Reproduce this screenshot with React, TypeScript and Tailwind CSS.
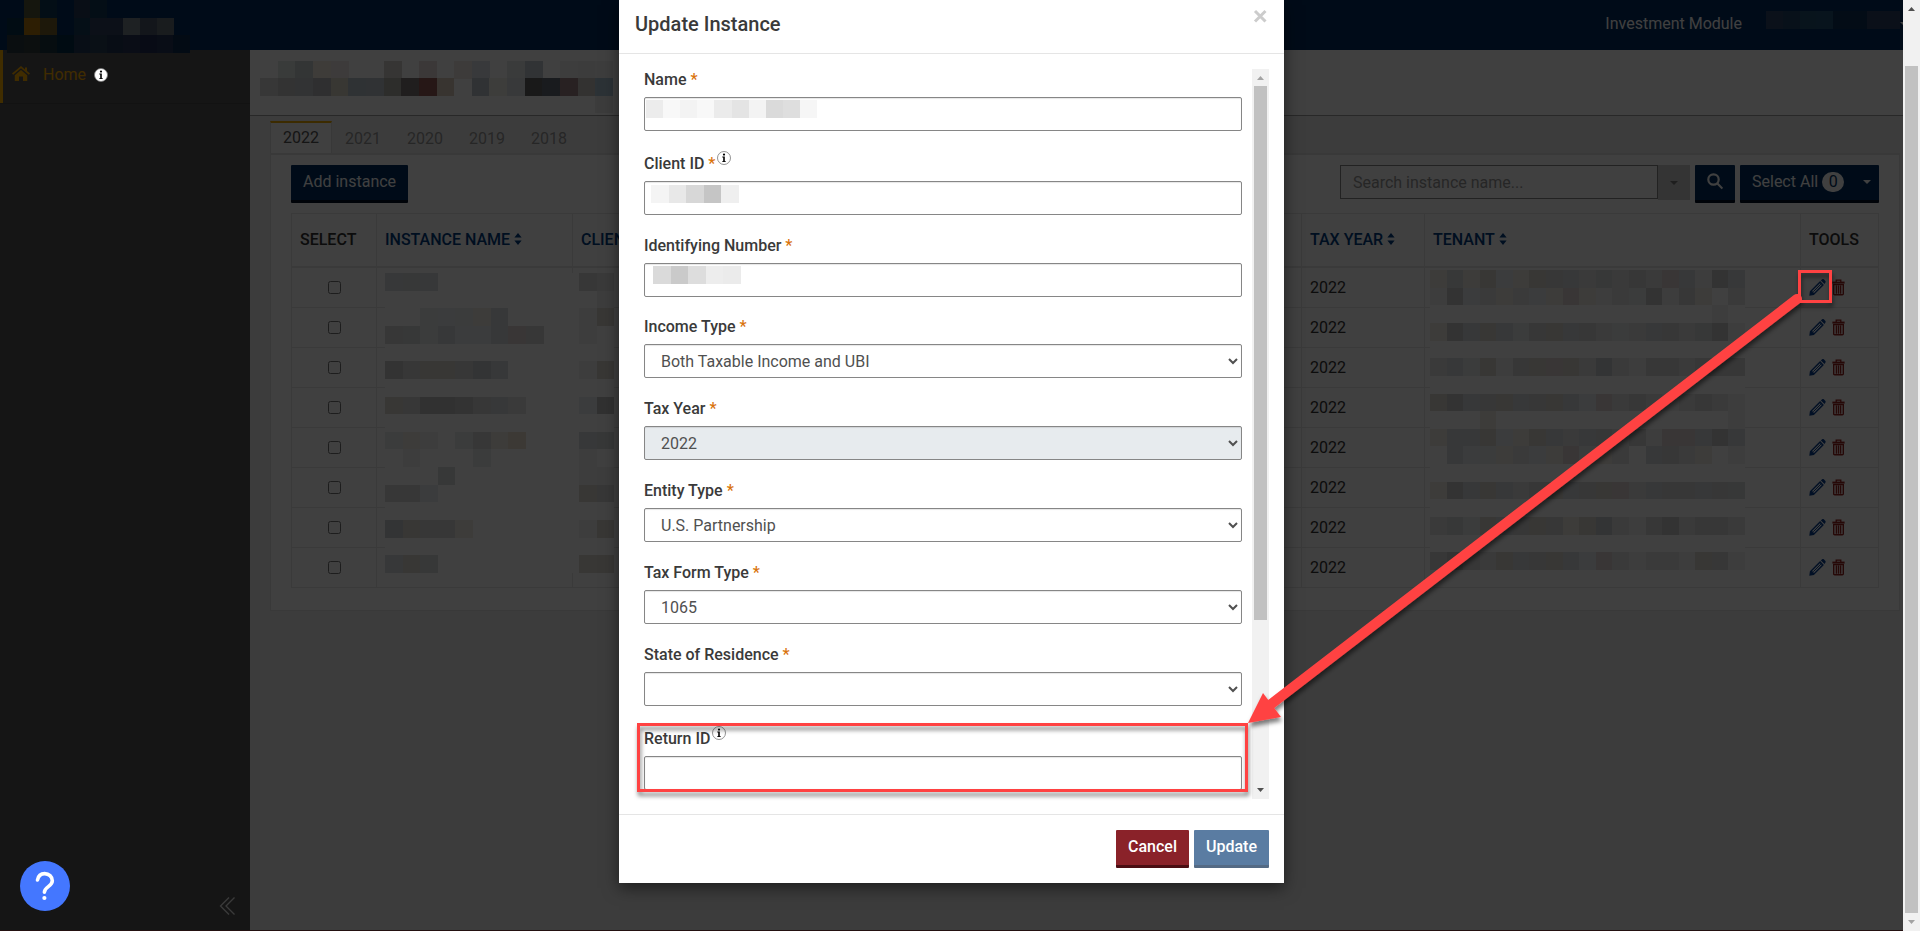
import type { ReactNode } from "react";

const palette: Record<string, string> = {
  ".": "#fdfdfd",
  a: "#f3f3f3",
  b: "#e8e8e8",
  c: "#dadada",
  d: "#cccccc",
  e: "#ebedf1",
  f: "#dadde3",
  g: "#f3f0e8",
  h: "#e0d9d2",
  i: "#e2d7d8",
  j: "#ebf0ee",
  k: "#dae0de",
  l: "#c2c2c2",
  m: "#c9cdd4",
  n: "#f0e4d4",
};

const nameBlocks = [
  "fkf..........",
  ".............",
  "..jejgf......",
  "ckjfeefic....",
  ".............",
  "dchhcmf......",
  ".............",
  "hclldcfb.....",
  ".............",
  "jga.jcgn.....",
  ".a...j.......",
  "...k.........",
  "cce..........",
  ".............",
  "mhccg........",
  ".............",
  "fhk..........",
];

const clientBlocks = ["cb", ".a", "ah", "a.", "..", "ah", "..", "el", "..", "fk", "a.", "aa", "hc", "..", "ah", "..", "hh"];

const tenantBlocks = [
  "gkgheghcfbkbcbifadf",
  "adebgbegigabjdacg.b",
  ".................a.",
  "gdfhfjchfcbjbfcbkda",
  "...................",
  "bfjhachihbmbaccbccc",
  "...................",
  "hdfchfchfeibcbabcba",
  "...g..............a",
  "gffheghfbfcbcaiifdf",
  ".fejgbegijgb.fcbg.a",
  "...................",
  "gdfhfbchfchibfccfck",
  "...................",
  "bkjhfchcghmbacdbccb",
  "...................",
  "cdcbhfchfeibabbahca",
];

const titleBlocks = [
  ["", "#e4e9e7", "#ccd3d1", "#f7efe4", "#f2ebea", "", "", "#d8d3cf", "", "#e9dddf", "", "#f4ebe6", "#e0e4ea", "", "#e6eceb", "#c4c9d3", "", "#f2f2f2", "#f0f0f0", "#f4f4f4"],
  ["#dcdcdc", "#cccccc", "#c6c9ce", "#bcbdc0", "#dfdccb", "#bcc7cf", "#bfc6ce", "#b3b2ad", "#807777", "#985b57", "#e0cdc0", "", "#bec5cf", "#f4f3ec", "#dde1e8", "#656565", "#666b7a", "#9f8586", "#cac8c2", "#afc5d8"],
  ["", "", "", "", "", "", "", "", "", "", "", "", "", "", "", "", "", "", "", "#eeeeee"],
];

const logoBlocks = [
  ["", "#54583a", "#0e3a5a", "", "#253858", "#123a58", "", "", "", "", ""],
  ["#04304e", "#b4780e", "#746028", "", "#163c5c", "#30405f", "#30405f", "#78838d", "#4e5a6c", "#646f78", ""],
  ["#283a40", "#323c3e", "#183642", "#022e4a", "#22385a", "#284058", "#223456", "#28365a", "#222c56", "#263458", "#0c2c50"],
];

const userBlocks = [["#2c4468", "#204468", "#225070", "#225274", "#0c3258", "#0e3258", "#2c4266", "#2c4266"]];

function Mosaic({ rows, width, height, className }: { rows: string[][]; width: number; height: number; className?: string }) {
  const w = width / rows[0].length;
  const h = height / rows.length;
  return (
    <svg className={className} width={width} height={height} shapeRendering="crispEdges" aria-hidden="true">
      {rows.flatMap((row, y) =>
        row.map((fill, x) => (fill ? <rect key={`${x}-${y}`} x={x * w} y={y * h} width={w + 0.3} height={h + 0.3} fill={fill} /> : null)),
      )}
    </svg>
  );
}

const expand = (rows: string[]) => rows.map((row) => row.split("").map((c) => palette[c]));

function SortIcon() {
  return (
    <svg className="ml-1 inline-block align-baseline" width="8" height="12" viewBox="0 0 8 12" fill="currentColor" aria-hidden="true">
      <path d="M4 0 7.6 4.4H.4zM4 12 .4 7.4h7.2z" />
    </svg>
  );
}

function PencilIcon() {
  return (
    <svg width="17" height="17" viewBox="0 0 17 17" aria-hidden="true">
      <path fill="#0a4192" fillRule="evenodd" d="M11.1 2 .9 12.300.3 16.700 4.900 15.900 14.900 5.900zM10.900 4.200 12.800 6.100 5 13.900 3.100 12z" />
      <path fill="#0a4192" d="M11.800 1.300 13 .4c.6-.5 1.400-.5 2 .1l1.200 1.200c.6.600.6 1.400.1 2L15.500 5.100z" />
      <path stroke="#0a4192" strokeWidth="1" d="m4.300 12.700 7.600-7.600" />
    </svg>
  );
}

function TrashIcon() {
  return (
    <svg width="13" height="17" viewBox="0 0 13 17" aria-hidden="true">
      <path fill="none" stroke="#98201f" strokeWidth="1.300" d="M4.200 3V1.200h4.600V3" />
      <path fill="#98201f" d="M.4 2.600h12.200v2H.4z" />
      <path fill="none" stroke="#98201f" strokeWidth="1.400" d="M1.700 5.600h9.600v9.200c0 .6-.4 1-1 1H2.700c-.6 0-1-.4-1-1zM4.400 6.400v8.400M6.500 6.400v8.400M8.600 6.400v8.400" />
    </svg>
  );
}

function InfoIcon({ className }: { className?: string }) {
  return (
    <svg className={className} width="14" height="14" viewBox="0 0 14 14" role="img" aria-label="Information">
      <circle cx="7" cy="7" r="6.500" fill="#fff" stroke="#777" strokeWidth=".8" />
      <circle cx="7" cy="3.600" r="1.100" fill="#000" />
      <path fill="#000" d="M5.300 5.500h2.500v4.700h1v.9H5.200v-.9h1V6.400h-.9z" />
    </svg>
  );
}

function Caret() {
  return <span className="inline-block border-x-4 border-t-4 border-x-transparent border-t-current" />;
}

const head = "h-[55px] border-l border-t border-b-2 border-[#e6e6e6] pl-2 text-left font-medium whitespace-nowrap";
const cell = "border-l border-b border-[#e6e6e6] pl-2";

function InstanceTable() {
  return (
    <div className="relative mt-[10px]">
      <table className="w-full table-fixed border-separate border-spacing-0 border-r border-[#e6e6e6] text-[#333]">
        <colgroup>
          <col className="w-[85px]" />
          <col className="w-[196px]" />
          <col />
          <col className="w-[123px]" />
          <col className="w-[376px]" />
          <col className="w-[78px]" />
        </colgroup>
        <thead>
          <tr>
            <th className={head}>SELECT</th>
            <th className={`${head} text-[#003c80]`}>INSTANCE NAME<SortIcon /></th>
            <th className={`${head} text-[#003c80]`}>CLIENT ID<SortIcon /></th>
            <th className={`${head} text-[#003c80]`}>TAX YEAR<SortIcon /></th>
            <th className={`${head} text-[#003c80]`}>TENANT<SortIcon /></th>
            <th className={head}>TOOLS</th>
          </tr>
        </thead>
        <tbody>
          {[1, 2, 3, 4, 5, 6, 7, 8].map((n) => (
            <tr key={n} className="h-10">
              <td className="border-b border-l border-[#e6e6e6] text-center">
                <input type="checkbox" aria-label={`Select instance ${n}`} className="mx-auto block h-[13px] w-[13px]" />
              </td>
              <td className={cell} />
              <td className={cell} />
              <td className={cell}>2022</td>
              <td className={cell} />
              <td className={cell}>
                <div className="flex items-center gap-[6px]">
                  <button type="button" aria-label="Edit instance"><PencilIcon /></button>
                  <button type="button" aria-label="Delete instance"><TrashIcon /></button>
                </div>
              </td>
            </tr>
          ))}
        </tbody>
      </table>
      <Mosaic rows={expand(nameBlocks)} width={229} height={300} className="absolute left-[94px] top-[60px]" />
      <Mosaic rows={expand(clientBlocks)} width={35} height={300} className="absolute left-[288px] top-[60px]" />
      <Mosaic rows={expand(tenantBlocks)} width={315} height={300} className="absolute right-[134px] top-[57px]" />
    </div>
  );
}

const field = "block h-[34px] w-full rounded-[2px] border border-[#868686] text-[#505050] shadow-[inset_0_1px_1px_rgba(0,0,0,0.1)]";

function Field({ id, label, required, info, children }: { id: string; label: string; required?: boolean; info?: boolean; children: ReactNode }) {
  return (
    <div>
      <label htmlFor={id} className={info ? "mb-[7px] flex h-[23px] items-end font-medium leading-5 text-[#3a3a3a]" : "mb-[7px] flex h-[21px] items-end font-medium leading-5 text-[#3a3a3a]"}>
        {label}
        {required && <span className="ml-1 text-[#d9730d]">*</span>}
        {info && <InfoIcon className="mb-[9px] ml-[2px]" />}
      </label>
      <div className="relative">{children}</div>
    </div>
  );
}

function SelectField({ id, label, value, disabled }: { id: string; label: string; value: string; disabled?: boolean }) {
  return (
    <Field id={id} label={label} required>
      <select id={id} disabled={disabled} className={`${field} bg-white px-3 disabled:bg-[#e7ebee] disabled:opacity-100`}>
        <option>{value}</option>
      </select>
    </Field>
  );
}

function UpdateDialog() {
  return (
    <section role="dialog" aria-labelledby="dialog-title" className="w-[665px] bg-white text-[#333] shadow-[0_5px_15px_rgba(0,0,0,0.5)]">
      <header className="flex h-[54px] items-start justify-between border-b border-[#e5e5e5] pl-4 pr-[15px]">
        <h2 id="dialog-title" className="mt-[10px] text-xl leading-7 font-medium text-[#3a3a3a]">Update Instance</h2>
        <button type="button" aria-label="Close" className="mt-1 px-px text-[#ccc]">
          <svg width="15" height="24" viewBox="0 0 15 24" aria-hidden="true">
            <path stroke="currentColor" strokeWidth="3" d="m2 7 10.500 10.500M12.500 7 2 17.500" />
          </svg>
        </button>
      </header>
      <div className="flex px-[15px] py-[15px]">
        <form className="flex h-[730px] flex-1 flex-col gap-[19px] overflow-hidden px-[10px]">
          <div className="flex flex-col gap-5">
            <Field id="name" label="Name" required>
              <input id="name" type="text" className={field} />
              <Mosaic rows={[["#ececec", "#f8f8f8", "#f3f3f3", "#f8f8f8", "#ebebeb", "#e4e4e4", "#f3f3f3", "#dadada", "#dedede", "#f6f6f6"]]} width={171} height={18} className="absolute left-[2px] top-[3px]" />
            </Field>
            <Field id="client" label="Client ID" required info>
              <input id="client" type="text" className={field} />
              <Mosaic rows={[["#f4f4f4", "#e8e8e8", "#d7d7d7", "#c5c5c5", "#efefef"]]} width={88} height={18} className="absolute left-[7px] top-1" />
            </Field>
            <Field id="number" label="Identifying Number" required>
              <input id="number" type="text" className={field} />
              <Mosaic rows={[["#dadada", "#cacaca", "#dddddd", "#ededed", "#ebebeb"]]} width={88} height={18} className="absolute left-[9px] top-[3px]" />
            </Field>
          </div>
          <div className="flex flex-col gap-5">
            <SelectField id="income" label="Income Type" value="Both Taxable Income and UBI" />
            <SelectField id="year" label="Tax Year" value="2022" disabled />
            <SelectField id="entity" label="Entity Type" value="U.S. Partnership" />
            <SelectField id="form" label="Tax Form Type" value="1065" />
            <SelectField id="state" label="State of Residence" value="" />
            <Field id="return" label="Return ID" info>
              <input id="return" type="text" className={field} />
            </Field>
          </div>
        </form>
        <div className="flex w-[17px] flex-col items-center justify-between bg-[#f1f1f1]" aria-hidden="true">
          <svg width="17" height="17"><path d="M5 11h7L8.500 7z" fill="#a3a3a3" /></svg>
          <div className="mb-auto h-[534px] w-[13px] bg-[#c1c1c1]" />
          <svg width="17" height="17"><path d="M5 6h7l-3.500 4z" fill="#505050" /></svg>
        </div>
      </div>
      <footer className="flex justify-end gap-[5px] border-t border-[#e5e5e5] p-[15px]">
        <button type="button" className="h-[38px] rounded-[1px] border-b-[3px] border-[#4a0d12] bg-[#8a2229] px-3 pb-[2px] font-medium text-white">Cancel</button>
        <button type="button" className="h-[38px] rounded-[1px] border-b-[3px] border-[#546a84] bg-[#5a7ca2] px-3 pb-[2px] font-medium text-white">Update</button>
      </footer>
    </section>
  );
}

function Toolbar() {
  const button = "h-[38px] rounded-[1px] border-b-[3px] border-[#000c20] bg-[#002f60] px-3 pb-[2px] text-white";
  return (
    <div className="flex items-start justify-between">
      <button type="button" className={button}>Add instance</button>
      <div className="flex items-start gap-[5px]">
        <div className="flex">
          <input type="text" placeholder="Search instance name..." aria-label="Search instance name" className="h-[34px] w-[318px] border border-[#888] bg-white px-3 placeholder:text-[#999]" />
          <button type="button" aria-label="Search options" className="flex h-[35px] w-8 items-center justify-center bg-[#d0d0d0] text-[#777]"><Caret /></button>
        </div>
        <button type="button" aria-label="Search" className={button}>
          <svg width="16" height="17" viewBox="0 0 16 17" fill="none" stroke="#fff" strokeWidth="2.200" aria-hidden="true">
            <circle cx="6.500" cy="6.500" r="5.200" />
            <path d="m10.400 10.400 5 5.200" />
          </svg>
        </button>
        <button type="button" className="flex h-[38px] w-[139px] items-center rounded-[1px] border-b-[3px] border-[#000c20] bg-[#002f60] pb-[2px] pl-3 pr-2 text-white">
          Select All
          <span className="ml-1 flex h-5 w-[22px] items-center justify-center rounded-full bg-white text-[#002f60]">0</span>
          <span className="ml-auto flex"><Caret /></span>
        </button>
      </div>
    </div>
  );
}

export default function App() {
  return (
    <div className="flex h-screen overflow-hidden font-[Roboto,sans-serif] text-base">
      <div className="relative flex min-w-0 flex-1 flex-col">
        <header className="relative z-10 flex h-[50px] shrink-0 items-center justify-end bg-[#002c60] pb-[2px] text-white">
          <Mosaic rows={logoBlocks} width={183} height={53} className="absolute left-[7px] top-0" />
          <span>Investment Module</span>
          <Mosaic rows={userBlocks} width={134} height={18} className="mb-[9px] ml-6" />
          <span className="flex w-[3px] overflow-hidden"><Caret /></span>
        </header>
        <div className="flex flex-1">
          <aside className="flex w-[250px] shrink-0 flex-col justify-between bg-[#565656]">
            <nav className="border-b border-[#484848]">
              <a href="#home" className="flex h-[53px] border-l-[3px] border-[#ffb400] pl-[9px] pt-[13px] text-[#ffae00]">
                <svg width="18" height="16" viewBox="0 0 18 16" className="mt-[3px]" fill="currentColor" aria-hidden="true">
                  <path d="M9 0 0 7.600l1.200 1.200L9 2.300l7.800 6.500L18 7.600l-3-2.600V1.500h-2v1.900z" />
                  <path d="M9 4 2.800 9.200V15H7v-4.500h4V15h4.200V9.200z" />
                </svg>
                <span className="ml-[13px]">Home</span>
              </a>
            </nav>
            <button type="button" aria-label="Collapse menu" className="mb-[14px] mr-[14px] self-end">
              <svg width="17" height="20" viewBox="0 0 17 20" fill="none" stroke="#e8e8e8" strokeWidth="1.300" aria-hidden="true">
                <path d="m10 1.500-8.500 8.500 8.500 8.500M15.500 1.500 7 10l8.500 8.500" />
              </svg>
            </button>
          </aside>
          <main className="min-w-0 flex-1 bg-[#f0f0f0]">
            <div className="h-[66px] border-b border-[#a0a0a0] bg-[#fdfdfd] pl-[10px] pt-[11px]">
              <Mosaic rows={titleBlocks} width={353} height={52} />
            </div>
            <div className="pl-5 pr-[3px] pt-[5px]">
              <div className="flex h-8 items-center text-[#999]">
                <a href="#2022" className="h-8 w-[62px] border-x border-t-2 border-x-[#e0e0e0] border-t-[#f0ab00] bg-[#fdfdfd] pt-[3px] text-center text-[#555]">2022</a>
                {["2021", "2020", "2019", "2018"].map((year) => (
                  <a key={year} href={`#${year}`} className="w-[62px] pt-1 text-center">{year}</a>
                ))}
              </div>
              <div className="border border-t-2 border-[#e4e4e4] bg-[#fdfdfd] px-5 pb-[22px] pt-[10px]">
                <Toolbar />
                <InstanceTable />
              </div>
            </div>
          </main>
        </div>
        <div className="h-px bg-[#8c4444]" />

        <div className="absolute inset-0 z-20 flex items-start justify-center bg-black/75">
          <UpdateDialog />
        </div>
        <InfoIcon className="absolute left-[94px] top-[68px] z-30" />
        <button type="button" aria-label="Help" className="absolute bottom-5 left-5 z-30 flex h-[50px] w-[50px] items-center justify-center rounded-full bg-[#4477ff]">
          <svg width="20" height="30" viewBox="0 0 20 30" fill="none" stroke="#fff" strokeWidth="3.600" strokeLinecap="round" aria-hidden="true">
            <path d="M2.500 9C3.300 4.700 6 2.600 9.700 2.600c4.200 0 7.600 3 7.600 7.200 0 6-7.900 5.600-7.900 11.400" />
            <circle cx="9.400" cy="27" r="2.100" fill="#fff" stroke="none" />
          </svg>
        </button>
        <svg className="pointer-events-none absolute left-0 top-0 z-30 h-full w-full" fill="none" aria-hidden="true">
          <defs>
            <filter id="shade" x="-10%" y="-20%" width="120%" height="150%">
              <feDropShadow dx="1" dy="4" stdDeviation="2" floodColor="#000" floodOpacity=".5" />
            </filter>
          </defs>
          <g filter="url(#shade)">
            <rect x="638.500" y="724.500" width="608" height="66" stroke="#ff4343" strokeWidth="3" />
            <rect x="1799.500" y="271.500" width="31" height="30" stroke="#ff4343" strokeWidth="3" />
            <path d="M1797 299 1266 708" stroke="#ff4343" strokeWidth="10" strokeLinecap="round" />
            <path d="m1248 723 15-30 18 24z" fill="#ff4343" />
          </g>
        </svg>
      </div>
      <div className="flex w-[17px] shrink-0 flex-col items-center bg-[#f1f1f1]" aria-hidden="true">
        <svg className="shrink-0" width="17" height="17"><path d="M5 11h7L8.500 7z" fill="#505050" /></svg>
        <div className="mb-1 mt-[49px] w-[13px] flex-1 bg-[#c1c1c1]" />
        <svg className="shrink-0" width="17" height="14"><path d="M5 3h7L8.500 7z" fill="#a3a3a3" /></svg>
      </div>
    </div>
  );
}
